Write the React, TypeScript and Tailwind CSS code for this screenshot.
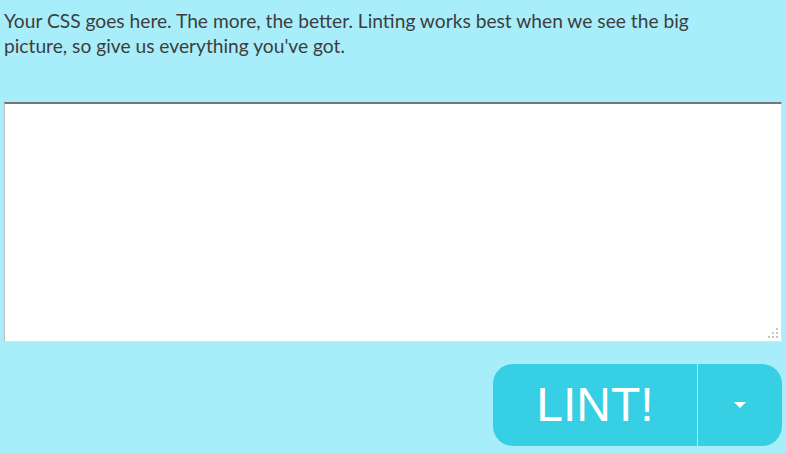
export default function App() {
  return (
    <div className="min-h-[453px] w-full bg-[#a8eefa] px-[4px] pt-[8px] pb-2">
      <p className="text-[19.2px] leading-[25px] text-[#3d3d3d] pr-[60px]" style={{ fontFamily: 'Lato, "Open Sans", sans-serif' }}>
        Your CSS goes here. The more, the better. Linting works best when we see the big picture, so give us everything you've got.
      </p>
      <div className="relative mt-[44px] w-[778px]">
        <textarea className="block h-[240px] w-full resize-none border-t-2 border-l border-r border-b border-t-[#767676] border-l-[#bdbdbd] border-r-[#e0e0e0] border-b-[#e0e0e0] bg-white p-1 outline-none" />
        <svg className="absolute right-[3px] bottom-[3px]" width="11" height="11" viewBox="0 0 11 11">
          <g fill="#c4c4c4">
            <rect x="8" y="0" width="2" height="2" />
            <rect x="4" y="4" width="2" height="2" />
            <rect x="8" y="4" width="2" height="2" />
            <rect x="0" y="8" width="2" height="2" />
            <rect x="4" y="8" width="2" height="2" />
            <rect x="8" y="8" width="2" height="2" />
          </g>
        </svg>
      </div>
      <div className="mt-[22px] flex justify-end">
        <div className="flex h-[82px] w-[289px] overflow-hidden rounded-[20px] bg-[#36cfe4]">
          <button className="flex w-[204px] items-center justify-center text-[48px] text-white" style={{ fontFamily: '"Liberation Sans", Arial, sans-serif' }}>
            LINT!
          </button>
          <div className="w-px bg-[#a8eefa]" />
          <button className="flex flex-1 items-center justify-center">
            <svg width="12" height="7" viewBox="0 0 12 7">
              <path d="M0 0 L12 0 L6 6 Z" fill="#fff" />
            </svg>
          </button>
        </div>
      </div>
    </div>
  );
}
